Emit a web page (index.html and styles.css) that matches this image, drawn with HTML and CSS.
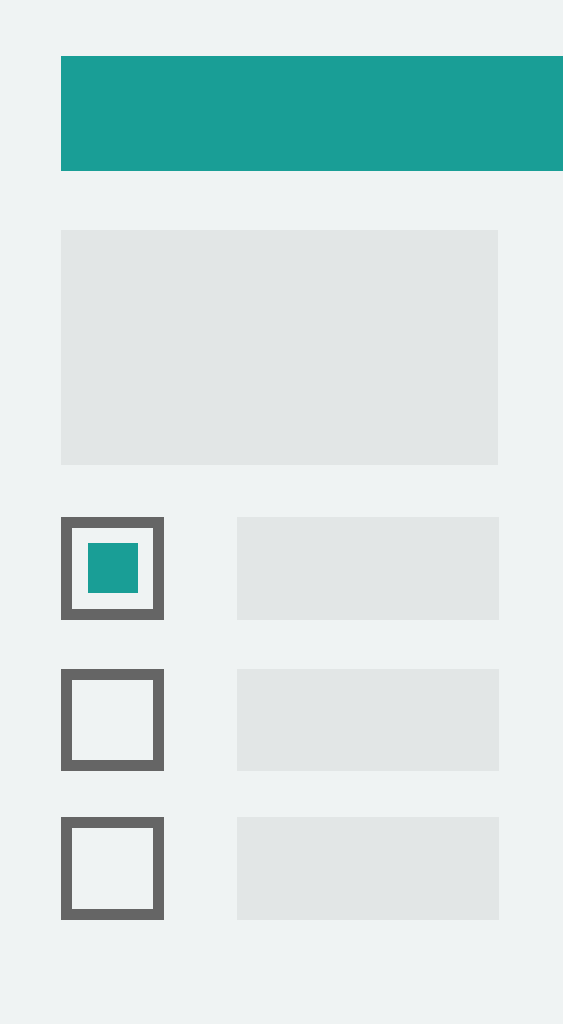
FILE: index.html
```html
<!DOCTYPE html>
<html lang="en">
<head>
<meta charset="utf-8">
<title>Form</title>
<link rel="stylesheet" href="styles.css">
</head>
<body>
<div class="page">
  <div class="header"></div>
  <div class="question"></div>
  <div class="options">
    <div class="option">
      <div class="check checked"><div class="mark"></div></div>
      <div class="label"></div>
    </div>
    <div class="option second">
      <div class="check"></div>
      <div class="label"></div>
    </div>
    <div class="option third">
      <div class="check"></div>
      <div class="label"></div>
    </div>
  </div>
</div>
</body>
</html>
```
FILE: styles.css
```css
html, body {
  margin: 0;
  padding: 0;
  background: #eff3f3;
  font-family: "Liberation Sans", sans-serif;
}
.page {
  width: 563px;
  height: 1024px;
  box-sizing: border-box;
  padding: 56px 0 0 61px;
  display: flex;
  flex-direction: column;
  overflow: hidden;
}
.header {
  height: 115px;
  background: #199e96;
}
.question {
  margin-top: 59px;
  width: 437px;
  height: 234.5px;
  background: #e2e6e6;
}
.options {
  margin-top: 52.5px;
  display: flex;
  flex-direction: column;
}
.option {
  display: flex;
  align-items: stretch;
  height: 102.5px;
}
.option.second { margin-top: 49px; }
.option.third { margin-top: 46px; }
.check {
  width: 102.5px;
  height: 102.5px;
  box-sizing: border-box;
  border: 11px solid #656565;
  display: flex;
  align-items: center;
  justify-content: center;
}
.mark {
  width: 50px;
  height: 50px;
  background: #199e96;
  margin-left: 2px;
}
.label {
  margin-left: 73.5px;
  width: 261.5px;
  background: #e2e6e6;
}
```
